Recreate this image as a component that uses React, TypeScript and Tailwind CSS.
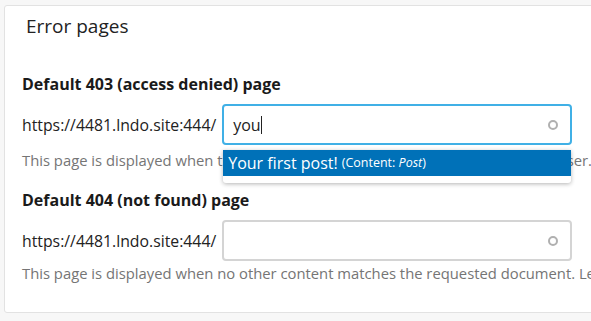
import React from "react";

const font = { fontFamily: '"Open Sans", "Liberation Sans", sans-serif' };

const Spinner = () => (
  <span className="ml-auto mr-[12px] block h-[10px] w-[10px] rounded-full border-2 border-[#b0b0b0]" />
);

interface FieldProps {
  title: string;
  value: string;
  focused?: boolean;
  description: string;
  descClass: string;
  children?: React.ReactNode;
}

const PathField: React.FC<FieldProps> = ({ title, value, focused, description, descClass, children }) => (
  <div className="flex flex-col">
    <div className="text-[16px] font-bold leading-[20px] text-[#1a1a1a]">{title}</div>
    <div className="mt-[10px] flex items-center">
      <span className="text-[15.8px] leading-[20px] text-[#222]">https://4481.lndo.site:444/</span>
      <div className="relative ml-[6px]">
        <div
          className={`flex h-[41px] w-[350px] items-center rounded-[4px] border-2 bg-white pl-[9px] ${
            focused ? "border-[#40b0e6]" : "border-[#d4d4d4]"
          }`}
        >
          <span className="text-[16px] text-[#222]">{value}</span>
          {focused && <span className="h-[18px] w-px bg-[#222]" />}
          <Spinner />
        </div>
        {children}
      </div>
    </div>
    <div className={`${descClass} text-[14.8px] leading-[20px] whitespace-nowrap text-[#757575]`}>{description}</div>
  </div>
);

export default function App() {
  return (
    <div className="h-[321px] w-[591px] overflow-hidden bg-[#f7f7f7] pt-[5px] pl-[4px]" style={font}>
      <div className="h-[308px] w-[700px] rounded-[3px] border border-[#e2e2e2] bg-white pl-[17px]">
        <div className="pt-[7px] pl-[4px] text-[19px] leading-[26px] text-[#222]">Error pages</div>
        <div className="mt-[35px] flex flex-col gap-[20px]">
          <PathField
            title="Default 403 (access denied) page"
            value="you"
            focused
            descClass="mt-[5px]"
            description="This page is displayed when the requested document is denied to the current user. Leave blank to display a generic &quot;access denied&quot; page."
          >
            <div className="absolute top-[46px] left-[1px] z-10 w-[348px] rounded-b-[3px] bg-white pb-[7px] shadow-[0_1px_4px_rgba(0,0,0,0.3)]">
              <div className="flex h-[26px] items-center bg-[#0071b8] pl-[5px] text-white">
                <span className="text-[16px]">Your first post!</span>
                <span className="ml-[4px] text-[12.5px]">
                  (Content: <em>Post</em>)
                </span>
              </div>
            </div>
          </PathField>
          <PathField
            title="Default 404 (not found) page"
            value=""
            descClass="mt-[2px]"
            description="This page is displayed when no other content matches the requested document. Leave blank to display a generic &quot;page not found&quot; page."
          />
        </div>
      </div>
    </div>
  );
}
